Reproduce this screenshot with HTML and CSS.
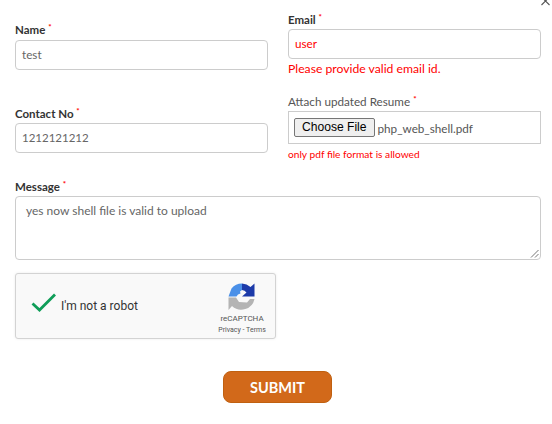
FILE: index.html
```html
<!DOCTYPE html>
<html lang="en">
<head>
    <meta charset="UTF-8">
    <title>Apply</title>
    <link rel="stylesheet" href="styles.css">
</head>
<body>
    <div class="modal">
        <svg class="close-icon" width="12" height="8" viewBox="0 0 12 8"><path d="M1.5 -3L9.5 5M9.5 -3L1.5 5" stroke="#555" stroke-width="1.1" fill="none"/></svg>

        <form class="apply-form">
            <div class="form-columns">
                <div class="form-col form-col-left">
                    <div class="form-group name-group">
                        <label class="field-label">Name <span class="req">*</span></label>
                        <div class="text-input">test</div>
                    </div>
                    <div class="form-group contact-group">
                        <label class="field-label">Contact No <span class="req">*</span></label>
                        <div class="text-input digits">1212121212</div>
                    </div>
                </div>
                <div class="form-col">
                    <div class="form-group email-group">
                        <label class="field-label">Email <span class="req">*</span></label>
                        <div class="text-input invalid">user</div>
                        <div class="error-text">Please provide valid email id.</div>
                    </div>
                    <div class="form-group">
                        <label class="field-label plain">Attach updated Resume <span class="req">*</span></label>
                        <div class="file-input">
                            <span class="file-btn">Choose File</span>
                            <span class="file-name">php_web_shell.pdf</span>
                        </div>
                        <div class="hint-text">only pdf file format is allowed</div>
                    </div>
                </div>
            </div>

            <div class="form-group message-group">
                <label class="field-label">Message <span class="req">*</span></label>
                <div class="text-area">
                    yes now shell file is valid to upload
                    <svg class="resize-grip" width="9" height="9" viewBox="0 0 9 9"><path d="M8.5 1L1 8.5M8.5 5L5 8.5" stroke="#777" stroke-width="1" fill="none"/></svg>
                </div>
            </div>

            <div class="captcha">
                <svg class="captcha-check" width="26" height="20" viewBox="0 0 26 20"><path d="M1.5 10.5L8.500 17L24 1.500" stroke="#0f9d58" stroke-width="2.800" fill="none"/></svg>
                <span class="captcha-label">I'm not a robot</span>
                <div class="captcha-brand">
                    <svg class="captcha-logo" width="28" height="28" viewBox="0 0 28 28">
                        <path d="M14 0.500A13.500 13.500 0 0 0 3.500 5.500L0.500 13.500H8.500L10 11.500L12.500 10.500L12 8.500L14 7Z" fill="#4a90e8"/>
                        <path d="M14 0.500A13.500 13.500 0 0 1 22.500 4L26.500 0.500V13.500H14L18.500 9.500A6.500 6.500 0 0 0 14 7Z" fill="#1c3aa9"/>
                        <path d="M0.500 14.500H8L11 19L19 19.500L22 16H26.500A13.500 13.500 0 0 1 4 23L0.500 27Z" fill="#b4b4b4"/>
                    </svg>
                    <div class="captcha-name">reCAPTCHA</div>
                    <div class="captcha-links">Privacy - Terms</div>
                </div>
            </div>

            <div class="submit-row">
                <button type="button" class="submit-btn">SUBMIT</button>
            </div>
        </form>
    </div>
</body>
</html>
```

FILE: styles.css
```css
* {
    margin: 0;
    padding: 0;
    box-sizing: border-box;
}

body {
    background: white;
    font-family: Lato, sans-serif;
    color: #555;
    overflow: hidden;
}

.modal {
    position: relative;
    height: 424px;
    padding: 12px 11px 0 15px;
}

.close-icon {
    position: absolute;
    top: 0;
    right: 0;
}

.form-columns {
    display: grid;
    grid-template-columns: 253px 253px;
    gap: 20px;
}

.form-col-left {
    padding-top: 10px;
}

.name-group {
    margin-bottom: 36px;
}

.email-group {
    margin-bottom: 17px;
}

.name-group .field-label {
    height: 18px;
}

.message-group {
    margin-top: 18px;
}

.field-label {
    display: block;
    height: 17px;
    font-size: 11.5px;
    line-height: 15px;
    font-weight: 700;
    color: #333;
}

.field-label.plain {
    font-size: 11.7px;
    font-weight: 400;
    color: #555;
}

.req {
    position: relative;
    top: -4px;
    color: #f00;
    font-size: 8px;
    font-weight: 700;
}

.text-input {
    height: 30px;
    padding: 0 6px;
    border: 1.5px solid #ccc;
    border-radius: 4px;
    font-size: 11.7px;
    line-height: 27px;
    color: #666;
}

.text-input.invalid {
    color: #f00;
}

.digits {
    font-size: 11.5px;
}

.error-text {
    margin-top: 1px;
    font-size: 12.2px;
    line-height: 17px;
    color: #f00;
}

.file-input {
    display: flex;
    align-items: center;
    height: 33px;
    padding: 0 5px;
    border: 1px solid #ccc;
    font-size: 11.7px;
    color: #555;
}

.file-btn {
    display: block;
    height: 19px;
    padding: 0 7px;
    margin-right: 3px;
    background: #efefef;
    border: 1px solid #767676;
    border-radius: 2px;
    font-family: "Liberation Sans", sans-serif;
    font-size: 12.1px;
    line-height: 17px;
    color: #000;
}

.hint-text {
    margin-top: 3px;
    font-size: 10.2px;
    line-height: 14px;
    color: #f00;
}

.text-area {
    position: relative;
    width: 526px;
    height: 64px;
    padding: 6px 10px;
    border: 1.5px solid #ccc;
    border-radius: 4px;
    font-size: 12px;
    line-height: 16px;
    color: #666;
}

.resize-grip {
    position: absolute;
    right: 1px;
    bottom: 1px;
}

.captcha {
    display: flex;
    align-items: center;
    width: 261px;
    height: 66px;
    margin-top: 13px;
    padding: 0 9px 0 15px;
    background: #f9f9f9;
    border: 1px solid #d3d3d3;
    border-radius: 3px;
    box-shadow: 0 0 3px rgba(0,0,0,0.08);
}

.captcha-check {
    margin-right: 4px;
    margin-bottom: 6px;
}

.captcha-label {
    flex: 1;
    font-family: Roboto, sans-serif;
    font-size: 12px;
    color: #333;
}

.captcha-brand {
    width: 48px;
    padding-top: 5px;
    text-align: center;
    font-family: Roboto, sans-serif;
    color: #555;
}

.captcha-logo {
    display: block;
    margin: 0 auto 2px;
}

.captcha-name {
    font-size: 8px;
    line-height: 12px;
}

.captcha-links {
    font-size: 7px;
    line-height: 10px;
    white-space: nowrap;
}

.submit-row {
    display: flex;
    justify-content: center;
    margin-top: 32px;
    padding-right: 1px;
}

.submit-btn {
    width: 109px;
    height: 32px;
    background: #d2691a;
    border: 1px solid #c06010;
    border-radius: 8px;
    font-family: Lato, sans-serif;
    font-size: 14.5px;
    font-weight: 700;
    color: white;
}
```
